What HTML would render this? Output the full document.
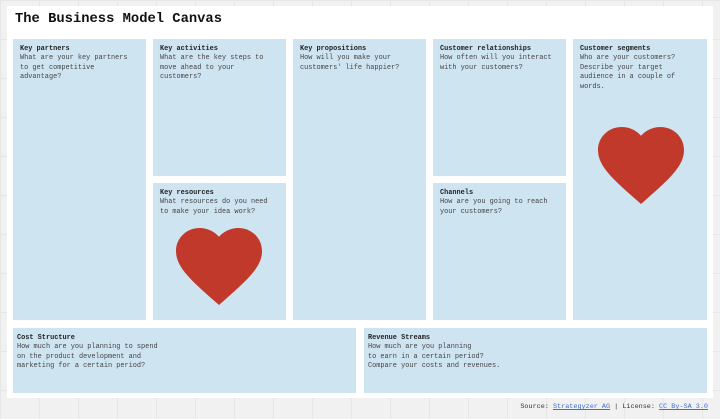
<!DOCTYPE html>
<html><head><meta charset="utf-8"><style>
body{margin:0;width:720px;height:419px;overflow:hidden;background:#f1f1f1;
background-image:linear-gradient(#e6e6e6 1px,transparent 1px),linear-gradient(90deg,#e6e6e6 1px,transparent 1px);background-size:39px 39px;
font-family:"Liberation Mono",monospace;position:relative}
.card{position:absolute;left:7px;top:6px;width:706px;height:392px;background:#fff}
h1{position:absolute;left:15px;top:12px;margin:0;font-size:13.8px;font-weight:bold;color:#111;letter-spacing:0}
.b{position:absolute;background:#cfe4f1;padding:6px 7px;box-sizing:border-box;font-size:6.9px;line-height:9.4px;color:#444;white-space:nowrap}
.b b{color:#222;display:block}
svg{position:absolute}
.f{position:absolute;right:12px;top:403px;font-size:6.8px;color:#333}
.f a{color:#3b6fd1;text-decoration:underline}
</style></head><body>
<div class="card"></div>
<h1>The Business Model Canvas</h1>
<div class="b" style="left:13px;top:39px;width:133px;height:281px"><b>Key partners</b>What are your key partners<br>to get competitive<br>advantage?</div>
<div class="b" style="left:153px;top:39px;width:133px;height:137px"><b>Key activities</b>What are the key steps to<br>move ahead to your<br>customers?</div>
<div class="b" style="left:153px;top:183px;width:133px;height:137px"><b>Key resources</b>What resources do you need<br>to make your idea work?</div>
<div class="b" style="left:293px;top:39px;width:133px;height:281px"><b>Key propositions</b>How will you make your<br>customers' life happier?</div>
<div class="b" style="left:433px;top:39px;width:133px;height:137px"><b>Customer relationships</b>How often will you interact<br>with your customers?</div>
<div class="b" style="left:433px;top:183px;width:133px;height:137px"><b>Channels</b>How are you going to reach<br>your customers?</div>
<div class="b" style="left:573px;top:39px;width:134px;height:281px"><b>Customer segments</b>Who are your customers?<br>Describe your target<br>audience in a couple of<br>words.</div>
<div class="b" style="left:13px;top:328px;width:343px;height:65px;padding-left:4px"><b>Cost Structure</b>How much are you planning to spend<br>on the product development and<br>marketing for a certain period?</div>
<div class="b" style="left:364px;top:328px;width:343px;height:65px;padding-left:4px"><b>Revenue Streams</b>How much are you planning<br>to earn in a certain period?<br>Compare your costs and revenues.</div>
<svg style="left:176px;top:228px" width="86" height="77" viewBox="2 3 20 18.35" preserveAspectRatio="none"><path fill="#c0392b" d="M12 21.35l-1.45-1.32C5.4 15.36 2 12.28 2 8.5 2 5.42 4.42 3 7.5 3c1.74 0 3.41.81 4.5 2.09C13.09 3.81 14.76 3 16.5 3 19.58 3 22 5.42 22 8.5c0 3.780-3.4 6.86-8.55 11.54L12 21.35z"/></svg>
<svg style="left:598px;top:127px" width="86" height="77" viewBox="2 3 20 18.35" preserveAspectRatio="none"><path fill="#c0392b" d="M12 21.35l-1.45-1.32C5.4 15.36 2 12.28 2 8.5 2 5.42 4.42 3 7.5 3c1.74 0 3.41.81 4.5 2.09C13.09 3.81 14.76 3 16.5 3 19.58 3 22 5.42 22 8.5c0 3.78-3.4 6.86-8.55 11.54L12 21.35z"/></svg>
<div class="f">Source: <a>Strategyzer AG</a> | License: <a>CC By-SA 3.0</a></div>
</body></html>
